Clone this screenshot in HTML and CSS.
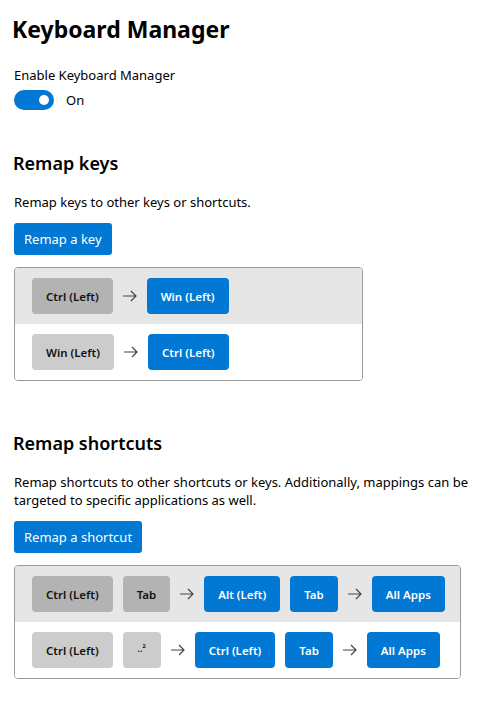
FILE: index.html
```html
<!DOCTYPE html>
<html>
<head>
<meta charset="utf-8">
<link rel="stylesheet" href="styles.css">
</head>
<body>
<div class="page">
  <h1 class="title">Keyboard Manager</h1>
  <div class="label">Enable Keyboard Manager</div>
  <div class="toggle-row">
    <span class="toggle"><span class="knob"></span></span>
    <span class="toggle-text">On</span>
  </div>

  <h2 class="section-title first">Remap keys</h2>
  <p class="desc">Remap keys to other keys or shortcuts.</p>
  <button class="btn">Remap a key</button>
  <div class="table keys-table">
    <div class="row alt">
      <span class="key dark">Ctrl (Left)</span>
      <span class="arrow"><svg width="14" height="12" viewBox="0 0 14 12"><path d="M0 6H13M8 1L13 6L8 11" fill="none" stroke="#444" stroke-width="1.2"/></svg></span>
      <span class="key blue">Win (Left)</span>
    </div>
    <div class="row">
      <span class="key light">Win (Left)</span>
      <span class="arrow"><svg width="14" height="12" viewBox="0 0 14 12"><path d="M0 6H13M8 1L13 6L8 11" fill="none" stroke="#444" stroke-width="1.2"/></svg></span>
      <span class="key blue">Ctrl (Left)</span>
    </div>
  </div>

  <h2 class="section-title second">Remap shortcuts</h2>
  <p class="desc">Remap shortcuts to other shortcuts or keys. Additionally, mappings can be targeted to specific applications as well.</p>
  <button class="btn">Remap a shortcut</button>
  <div class="table shortcuts-table">
    <div class="row alt">
      <span class="key dark">Ctrl (Left)</span>
      <span class="key dark">Tab</span>
      <span class="arrow"><svg width="14" height="12" viewBox="0 0 14 12"><path d="M0 6H13M8 1L13 6L8 11" fill="none" stroke="#444" stroke-width="1.2"/></svg></span>
      <span class="key blue">Alt (Left)</span>
      <span class="key blue">Tab</span>
      <span class="arrow"><svg width="14" height="12" viewBox="0 0 14 12"><path d="M0 6H13M8 1L13 6L8 11" fill="none" stroke="#444" stroke-width="1.2"/></svg></span>
      <span class="key blue">All Apps</span>
    </div>
    <div class="row">
      <span class="key light">Ctrl (Left)</span>
      <span class="key light tiny">‥²</span>
      <span class="arrow"><svg width="14" height="12" viewBox="0 0 14 12"><path d="M0 6H13M8 1L13 6L8 11" fill="none" stroke="#444" stroke-width="1.2"/></svg></span>
      <span class="key blue">Ctrl (Left)</span>
      <span class="key blue">Tab</span>
      <span class="arrow"><svg width="14" height="12" viewBox="0 0 14 12"><path d="M0 6H13M8 1L13 6L8 11" fill="none" stroke="#444" stroke-width="1.2"/></svg></span>
      <span class="key blue">All Apps</span>
    </div>
  </div>
</div>
</body>
</html>
```
FILE: styles.css
```css
* { box-sizing: border-box; }
html, body { margin: 0; padding: 0; background: #fff; }
body {
  font-family: "Noto Sans", "Open Sans", sans-serif;
  color: #000;
}
.page {
  padding: 14px 14px 0 14px;
  display: flex;
  flex-direction: column;
  align-items: flex-start;
}
.title {
  margin: -1px 0 0 -2px;
  font-size: 23px;
  font-weight: 700;
  line-height: 32px;
}
.label {
  margin-top: 21px;
  font-size: 13px;
  line-height: 18px;
}
.toggle-row {
  margin-top: 6px;
  display: flex;
  align-items: center;
  gap: 12px;
}
.toggle {
  width: 40px;
  height: 20px;
  border-radius: 10px;
  background: #0078d4;
  display: flex;
  align-items: center;
  justify-content: flex-end;
  padding-right: 5px;
}
.knob {
  width: 10px;
  height: 10px;
  border-radius: 50%;
  background: #fff;
}
.toggle-text {
  font-size: 13px;
}
.section-title {
  margin: 0 0 0 -1px;
  font-size: 18px;
  font-weight: 600;
  line-height: 26px;
}
.section-title.first { margin-top: 40px; }
.section-title.second { margin-top: 49px; }
.desc {
  margin: 17px 0 0 0;
  font-size: 13px;
  line-height: 18px;
  max-width: 470px;
}
.btn {
  margin-top: 12px;
  height: 32px;
  padding: 0 10px;
  border: none;
  border-radius: 3px;
  background: #0078d4;
  color: #fff;
  font-family: inherit;
  font-size: 13px;
}
.table {
  margin-top: 12px;
  border: 1px solid #999;
  border-radius: 4px;
  overflow: hidden;
}
.keys-table { width: 349px; }
.shortcuts-table { width: 447px; }
.row {
  display: flex;
  align-items: center;
  gap: 10px;
  padding: 10px 17px;
  background: #fff;
}
.row.alt { background: #e6e6e6; }
.key {
  height: 36px;
  padding: 0 14px;
  border-radius: 4px;
  display: flex;
  align-items: center;
  font-size: 11.5px;
  font-weight: 600;
  white-space: nowrap;
}
.key.dark { background: #b3b3b3; color: #111; }
.key.light { background: #cccccc; color: #111; }
.key.blue { background: #0078d4; color: #fff; }
.key.tiny {
  width: 38px;
  padding: 0;
  justify-content: center;
  font-size: 9px;
  padding-bottom: 4px;
}
.arrow {
  width: 14px;
  height: 12px;
  display: flex;
}
```
